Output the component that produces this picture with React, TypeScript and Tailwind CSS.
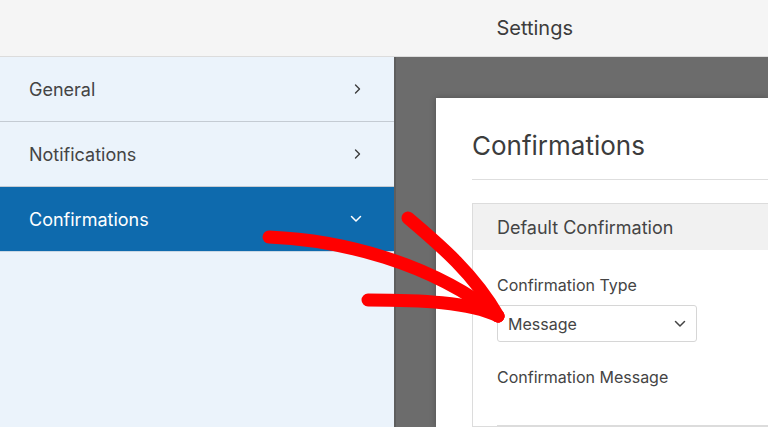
import React from 'react';

const font = { fontFamily: 'Inter, "Noto Sans", "Liberation Sans", sans-serif' };

function ChevronRight() {
  return (
    <svg width="9" height="12" viewBox="0 0 9 12" fill="none">
      <path d="M2.5 2l4 4-4 4" stroke="#3c3c3c" strokeWidth="1.4" strokeLinecap="round" strokeLinejoin="round" />
    </svg>
  );
}

function ChevronDown({ color = '#fff', w = 12 }: { color?: string; w?: number }) {
  return (
    <svg width={w} height="8" viewBox="0 0 12 8" fill="none">
      <path d="M1.5 1.5l4.5 4.5 4.5-4.5" stroke={color} strokeWidth="1.5" strokeLinecap="round" strokeLinejoin="round" />
    </svg>
  );
}

const items = [
  { label: 'General', active: false },
  { label: 'Notifications', active: false },
  { label: 'Confirmations', active: true },
];

export default function App() {
  return (
    <div className="relative w-[768px] h-[427px] overflow-hidden flex flex-col bg-white" style={font}>
      {/* header */}
      <div className="h-[57px] shrink-0 bg-[#f5f5f5] border-b border-[#dcdcdc] flex items-center">
        <div className="w-[534px] text-right">
          <span className="inline-block translate-x-[39px] text-[20px] text-[#3c3c3c]">Settings</span>
        </div>
      </div>

      <div className="flex flex-1 min-h-0">
        {/* sidebar */}
        <div className="w-[394px] shrink-0 bg-[#ebf3fb]">
          {items.map((it) => (
            <div
              key={it.label}
              className={
                it.active
                  ? 'h-[65px] flex items-center justify-between pl-[29px] pr-[32px] bg-[#0e6aad] border-b border-[#c9d7e4]'
                  : 'h-[65px] flex items-center justify-between pl-[29px] pr-[32px] border-b border-[#c4cbd3]'
              }
            >
              <span className={it.active ? 'text-[18px] text-white' : 'text-[18px] text-[#444]'}>{it.label}</span>
              {it.active ? <ChevronDown /> : <ChevronRight />}
            </div>
          ))}
        </div>

        {/* preview */}
        <div className="flex-1 bg-[#6c6c6c] border-l-2 border-[#5e5e5e] pt-[41px] pl-[40px] flex">
          <div className="flex-1 bg-white pl-[36px] pt-[32px] shadow-[0_0_6px_rgba(0,0,0,0.25)]">
            <div className="text-[26px] leading-[32px] text-[#3c3c3c]">Confirmations</div>
            <div className="mt-[17px] border-t border-[#dedede]" />
            <div className="mt-[23px] border border-[#dcdcdc] border-r-0">
              <div className="h-[46px] bg-[#f1f1f1] flex items-center pl-[24px] text-[18px] text-[#444]">
                Default Confirmation
              </div>
              <div className="pl-[24px] pt-[25px]">
                <div className="text-[16px] leading-[20px] text-[#444]">Confirmation Type</div>
                <div className="mt-[10px] w-[200px] h-[37px] border border-[#d6d6d6] rounded-[3px] flex items-center justify-between pl-[10px] pr-[10px]">
                  <span className="text-[16px] text-[#444]">Message</span>
                  <ChevronDown color="#444" />
                </div>
                <div className="mt-[25px] text-[16px] leading-[20px] text-[#444]">Confirmation Message</div>
                <div className="mt-[38px] border-t border-[#dcdcdc]" />
              </div>
            </div>
          </div>
        </div>
      </div>

      {/* red hand-drawn arrow */}
      <svg className="absolute inset-0 pointer-events-none" width="768" height="427" viewBox="0 0 768 427">
        <g stroke="#ff0000" strokeWidth="13" strokeLinecap="round" strokeLinejoin="round" fill="none">
          <path d="M269 237 C 340 240, 430 262, 498 316" />
          <path d="M408 218 C 440 245, 475 275, 498 316" />
          <path d="M368 300 C 420 300, 470 302, 498 316" />
        </g>
      </svg>
    </div>
  );
}
